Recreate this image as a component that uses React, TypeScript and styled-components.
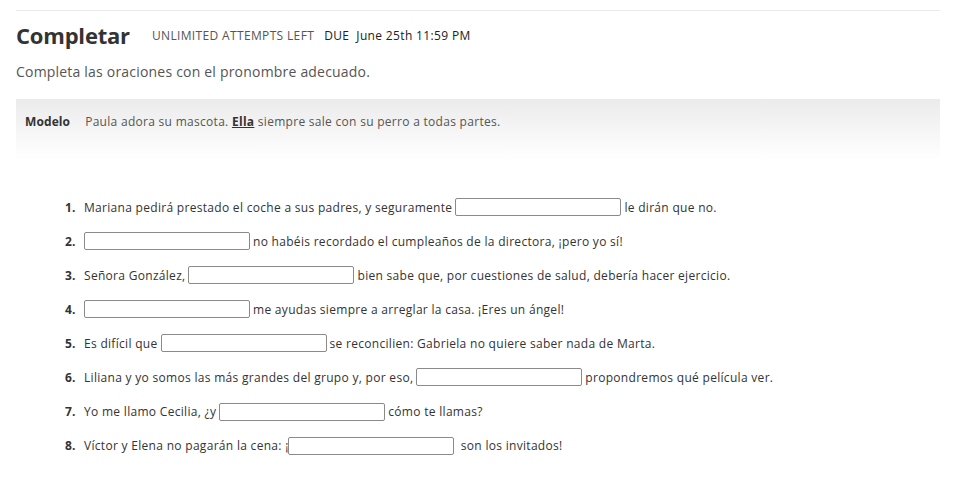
import React from "react";
import styled, { createGlobalStyle } from "styled-components";

const Global = createGlobalStyle`
  html, body { margin: 0; padding: 0; background: #fff; }
  body { font-family: "Open Sans", "Noto Sans", sans-serif; color: #333; }
`;

const Page = styled.div`
  padding: 10px 20px 0 16px;
`;

const Header = styled.header`
  border-top: 1px solid #eaeaea;
  padding-top: 9px;
  display: flex;
  align-items: center;
  gap: 22px;
`;

const Title = styled.h1`
  margin: 0;
  font-size: 22px;
  font-weight: 700;
  color: #333;
  line-height: 30px;
  letter-spacing: -0.2px;
`;

const Meta = styled.div`
  display: flex;
  align-items: baseline;
  font-size: 12px;
  color: #555;
  gap: 10px;
  letter-spacing: 0.35px;
  padding-top: 1px;
`;

const Due = styled.span`
  color: #222;
  display: flex;
  gap: 7px;
`;

const Instruction = styled.p`
  margin: 12px 0 0;
  font-size: 14px;
  color: #555;
  line-height: 20px;
  letter-spacing: 0.2px;
`;

const Model = styled.div`
  margin-top: 17px;
  height: 61px;
  background: linear-gradient(#ebebeb, #ffffff);
  display: flex;
  align-items: flex-start;
  padding: 15px 9px 0;
  box-sizing: border-box;
  font-size: 12px;
  line-height: 16px;
  gap: 15px;
  letter-spacing: 0.29px;
`;

const ModelLabel = styled.span`
  font-weight: 700;
  color: #333;
  letter-spacing: 0.1px;
`;

const ModelText = styled.span`
  color: #555;
  b {
    font-weight: 700;
    color: #333;
    text-decoration: underline;
  }
`;

const List = styled.ol`
  list-style: none;
  margin: 38px 0 0;
  padding: 0 0 0 49px;
  display: flex;
  flex-direction: column;
  gap: 16.1px;
`;

const Item = styled.li`
  display: flex;
  align-items: center;
  font-size: 12px;
  color: #333;
  height: 18px;
  letter-spacing: 0.3px;
`;

const Num = styled.span`
  font-weight: 700;
  width: 19px;
  flex: none;
  letter-spacing: 0;
`;

const Blank = styled.input<{ $lead?: boolean }>`
  width: 166px;
  height: 18px;
  box-sizing: border-box;
  border: 1px solid #8a8a8a;
  border-radius: 2px;
  margin: 0 3px 0 ${(p) => (p.$lead ? "0" : "3px")};
  padding: 0 4px;
  font: inherit;
  background: #fff;
`;

const Text = styled.span`
  white-space: pre;
`;

const Opener = styled.span`
  letter-spacing: 0;
`;

type Part = string | null;
const items: Part[][] = [
  ["Mariana pedirá prestado el coche a sus padres, y seguramente", null, "le dirán que no."],
  [null, "no habéis recordado el cumpleaños de la directora, ¡pero yo sí!"],
  ["Señora González,", null, "bien sabe que, por cuestiones de salud, debería hacer ejercicio."],
  [null, "me ayudas siempre a arreglar la casa. ¡Eres un ángel!"],
  ["Es difícil que", null, "se reconcilien: Gabriela no quiere saber nada de Marta."],
  ["Liliana y yo somos las más grandes del grupo y, por eso,", null, "propondremos qué película ver."],
  ["Yo me llamo Cecilia, ¿y", null, "cómo te llamas?"],
  ["Víctor y Elena no pagarán la cena: ¡", null, " son los invitados!"],
];

function Row({ parts }: { parts: Part[] }) {
  return (
    <>
      {parts.map((p, j) => {
        if (p === null) {
          const prev = j > 0 ? parts[j - 1] : null;
          const tight = j === 0 || (typeof prev === "string" && prev.endsWith("¡"));
          return <Blank key={j} type="text" aria-label="respuesta" $lead={tight} />;
        }
        if (p.endsWith("¡")) {
          return (
            <Text key={j}>
              {p.slice(0, -1)}
              <Opener>¡</Opener>
            </Text>
          );
        }
        return <Text key={j}>{p}</Text>;
      })}
    </>
  );
}

export default function App() {
  return (
    <>
      <Global />
      <Page>
        <Header>
          <Title>Completar</Title>
          <Meta>
            <span>UNLIMITED ATTEMPTS LEFT</span>
            <Due>
              <span>DUE</span>
              <span>June 25th 11:59 PM</span>
            </Due>
          </Meta>
        </Header>
        <Instruction>Completa las oraciones con el pronombre adecuado.</Instruction>
        <Model>
          <ModelLabel>Modelo</ModelLabel>
          <ModelText>
            Paula adora su mascota. <b>Ella</b> siempre sale con su perro a todas partes.
          </ModelText>
        </Model>
        <List>
          {items.map((parts, i) => (
            <Item key={i}>
              <Num>{i + 1}.</Num>
              <Row parts={parts} />
            </Item>
          ))}
        </List>
      </Page>
    </>
  );
}
